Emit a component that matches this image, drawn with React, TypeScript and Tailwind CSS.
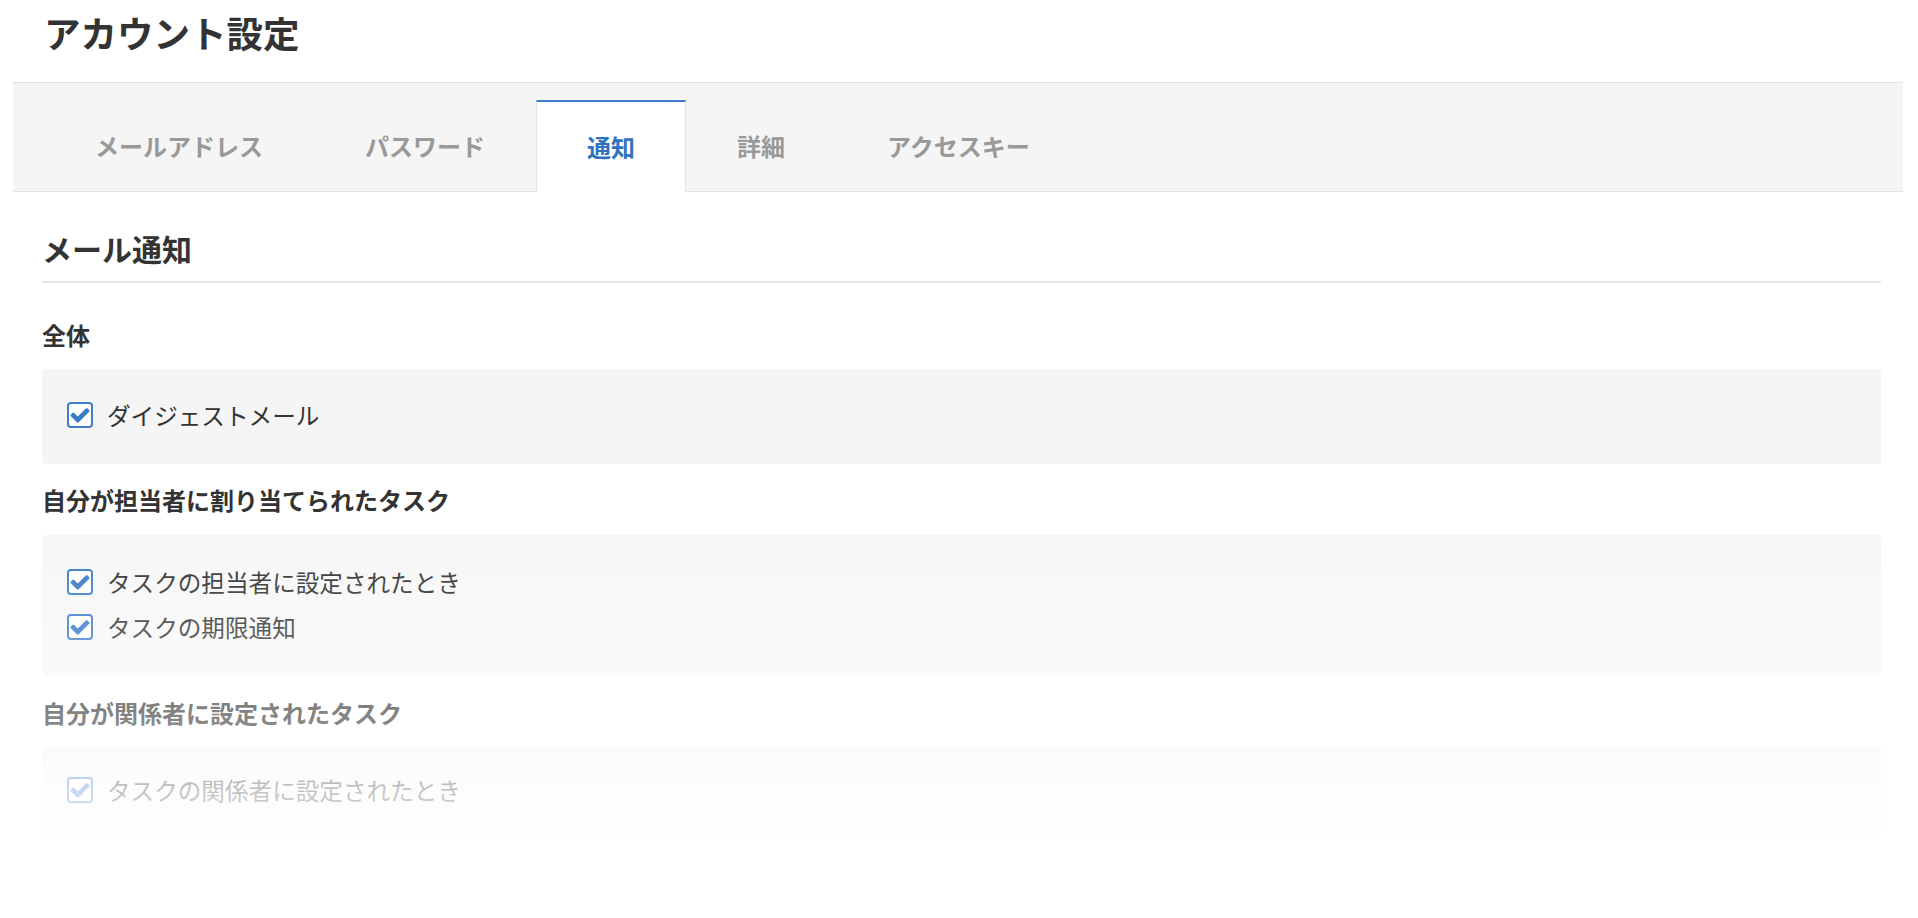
import React from 'react';

const tabs = ['メールアドレス', 'パスワード', '通知', '詳細', 'アクセスキー'];

function CheckBox() {
  return (
    <span className="flex h-[26px] w-[26px] shrink-0 items-center justify-center rounded-[4px] border-2 border-[#3d7dca] bg-white">
      <svg width="22" height="22" viewBox="0 0 1792 1792" fill="#3a7bc8">
        <path d="M1671 566q0 40-28 68l-724 724-136 136q-28 28-68 28t-68-28l-136-136-362-362q-28-28-28-68t28-68l136-136q28-28 68-28t68 28l294 295 656-657q28-28 68-28t68 28l136 136q28 28 28 68z" />
      </svg>
    </span>
  );
}

function CheckRow({ label }: { label: string }) {
  return (
    <label className="flex h-[45px] items-center">
      <CheckBox />
      <span className="ml-[14px] text-[23.6px] leading-[32px] text-[#333]">{label}</span>
    </label>
  );
}

export default function App() {
  return (
    <div className="relative min-h-[918px] overflow-hidden bg-white font-['Noto_Sans_CJK_JP',sans-serif] text-[#333]">
      <div className="h-[82px] px-[44px] pt-[10px]">
        <h1 className="text-[36.5px] font-bold leading-[46px] text-[#333]">アカウント設定</h1>
      </div>

      <div className="ml-[13px] mr-[15px] flex h-[110px] items-end border-y border-[#e2e2e2] bg-[#f5f5f5] pl-[31px]">
        {tabs.map((tab) => {
          const active = tab === '通知';
          return active ? (
            <div
              key={tab}
              className="-mb-px flex h-[92px] items-center border-x border-t-2 border-x-[#e2e2e2] border-t-[#3b7dc9] bg-white px-[50px] text-[24px] font-bold text-[#2f73c0]"
            >
              {tab}
            </div>
          ) : (
            <div key={tab} className="flex h-[91px] items-center px-[51px] text-[24px] font-bold text-[#999]">
              {tab}
            </div>
          );
        })}
      </div>

      <div className="ml-[42px] mr-[37px]">
        <h2 className="mt-[36px] border-b-2 border-[#e6e6e6] pb-[13px] text-[30px] font-bold leading-[40px]">
          メール通知
        </h2>

        <h3 className="mt-[36px] text-[24px] font-bold leading-[32px]">全体</h3>
        <div className="mt-[18px] rounded-[3px] bg-[#f5f5f5] px-[25px] pb-[27px] pt-[23px]">
          <CheckRow label="ダイジェストメール" />
        </div>

        <h3 className="mt-[20px] text-[24px] font-bold leading-[32px]">自分が担当者に割り当てられたタスク</h3>
        <div className="mt-[19px] rounded-[3px] bg-[#f7f7f7] px-[25px] pb-[26px] pt-[24px]">
          <CheckRow label="タスクの担当者に設定されたとき" />
          <CheckRow label="タスクの期限通知" />
        </div>

        <h3 className="mt-[22px] text-[24px] font-bold leading-[32px]">自分が関係者に設定されたタスク</h3>
        <div className="mt-[17px] rounded-[3px] bg-[#f7f7f7] px-[25px] pb-[25px] pt-[21px]">
          <CheckRow label="タスクの関係者に設定されたとき" />
        </div>
      </div>

      <div className="pointer-events-none absolute left-0 right-0 top-[540px] h-[378px] bg-[linear-gradient(to_bottom,rgba(255,255,255,0)_0%,rgba(255,255,255,0.4)_47%,rgba(255,255,255,0.72)_67%,rgba(255,255,255,1)_100%)]" />
    </div>
  );
}
